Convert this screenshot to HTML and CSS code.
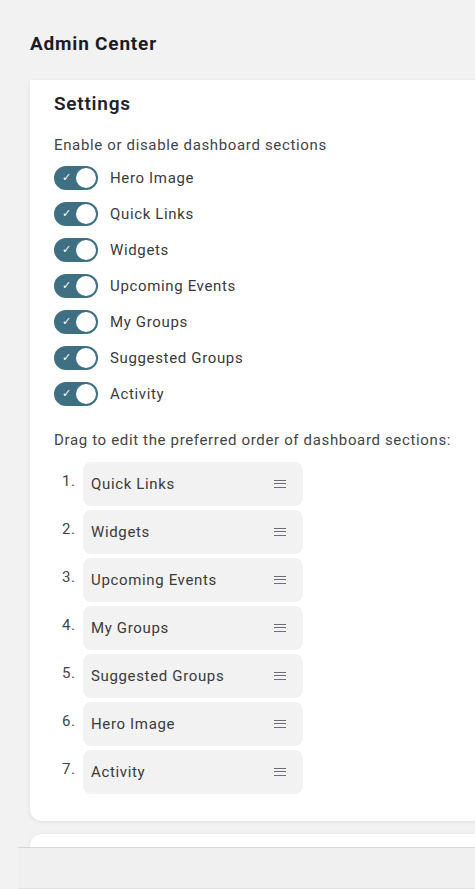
FILE: index.html
```html
<!DOCTYPE html>
<html lang="en">
<head>
    <meta charset="UTF-8">
    <meta name="viewport" content="width=device-width, initial-scale=1.0">
    <title>Admin Center</title>
    <link rel="stylesheet" href="styles.css">
</head>
<body>
    <div class="page">
        <h1 class="page-title">Admin Center</h1>

        <div class="card settings-card">
            <h2>Settings</h2>
            <p class="hint">Enable or disable dashboard sections</p>
            <div class="toggles">
                <label class="toggle-row"><span class="switch"><span class="check">&#10003;</span><span class="knob"></span></span>Hero Image</label>
                <label class="toggle-row"><span class="switch"><span class="check">&#10003;</span><span class="knob"></span></span>Quick Links</label>
                <label class="toggle-row"><span class="switch"><span class="check">&#10003;</span><span class="knob"></span></span>Widgets</label>
                <label class="toggle-row"><span class="switch"><span class="check">&#10003;</span><span class="knob"></span></span>Upcoming Events</label>
                <label class="toggle-row"><span class="switch"><span class="check">&#10003;</span><span class="knob"></span></span>My Groups</label>
                <label class="toggle-row"><span class="switch"><span class="check">&#10003;</span><span class="knob"></span></span>Suggested Groups</label>
                <label class="toggle-row"><span class="switch"><span class="check">&#10003;</span><span class="knob"></span></span>Activity</label>
            </div>

            <p class="hint order-hint">Drag to edit the preferred order of dashboard sections:</p>
            <ol class="order-list">
                <li><span class="num">1.</span><div class="drag-item">Quick Links<span class="handle"></span></div></li>
                <li><span class="num">2.</span><div class="drag-item">Widgets<span class="handle"></span></div></li>
                <li><span class="num">3.</span><div class="drag-item">Upcoming Events<span class="handle"></span></div></li>
                <li><span class="num">4.</span><div class="drag-item">My Groups<span class="handle"></span></div></li>
                <li><span class="num">5.</span><div class="drag-item">Suggested Groups<span class="handle"></span></div></li>
                <li><span class="num">6.</span><div class="drag-item">Hero Image<span class="handle"></span></div></li>
                <li><span class="num">7.</span><div class="drag-item">Activity<span class="handle"></span></div></li>
            </ol>
        </div>

        <div class="card next-card"></div>
    </div>

    <div class="footer-bar"></div>
</body>
</html>
```

FILE: styles.css
```css
html, body { overflow-x: hidden; }
body {
    margin: 0;
    background-color: #f2f2f2;
    font-family: Roboto, "Noto Sans", Arial, sans-serif;
    color: #444;
    letter-spacing: 0.65px;
}
.page { padding: 32px 0 60px 30px; }
.page-title {
    margin: 0 0 24px;
    font-size: 19px;
    line-height: 24px;
    font-weight: 700;
    color: #1c1c26;
    letter-spacing: 0.8px;
}
.card {
    background-color: #fff;
    width: 470px;
    box-shadow: 0 1px 4px rgba(0,0,0,0.08);
}
.settings-card {
    padding: 12px 24px 27px;
    border-radius: 0 0 12px 12px;
}
.next-card { margin-top: 13px; height: 60px; border-radius: 12px 12px 0 0; }
.settings-card h2 {
    margin: 0 0 19px;
    font-size: 19px;
    line-height: 24px;
    font-weight: 600;
    color: #22222c;
    letter-spacing: 0.75px;
}
.hint { margin: 0; font-size: 15px; line-height: 20px; color: #444; }
.toggles { display: flex; flex-direction: column; gap: 12px; margin-top: 11px; }
.toggle-row {
    display: flex;
    align-items: center;
    gap: 12px;
    font-size: 15px;
    line-height: 24px;
    color: #3a3a3a;
}
.switch {
    position: relative;
    display: inline-block;
    width: 44px;
    height: 24px;
    border-radius: 12px;
    background-color: #3e6f82;
}
.check {
    position: absolute;
    left: 8px;
    top: 0;
    font-size: 11px;
    line-height: 24px;
    color: #fff;
}
.knob {
    position: absolute;
    right: 2px;
    top: 2px;
    width: 20px;
    height: 20px;
    border-radius: 50%;
    background-color: #fff;
}
.order-hint { margin-top: 24px; }
.order-list {
    list-style: none;
    margin: 12px 0 0;
    padding: 0;
    display: flex;
    flex-direction: column;
    gap: 4px;
}
.order-list li { display: flex; align-items: flex-start; }
.num {
    width: 21px;
    padding-left: 8px;
    font-size: 15px;
    line-height: 20px;
    padding-top: 9px;
    color: #444;
}
.drag-item {
    display: flex;
    align-items: center;
    justify-content: space-between;
    width: 220px;
    height: 44px;
    padding: 0 17px 0 8px;
    box-sizing: border-box;
    border-radius: 8px;
    background-color: #f2f2f2;
    font-size: 15px;
    color: #3a3a3a;
}
.handle {
    width: 12px;
    height: 8px;
    border-top: 1.5px solid #6e6e78;
    border-bottom: 1.5px solid #6e6e78;
    position: relative;
    box-sizing: border-box;
}
.handle::after {
    content: "";
    position: absolute;
    left: 0;
    right: 0;
    top: 1.75px;
    height: 1.5px;
    background-color: #6e6e78;
}
.footer-bar {
    position: fixed;
    left: 18px;
    right: 0;
    bottom: 0;
    height: 40px;
    background-color: #f0f0f0;
    border-top: 1px solid #d6d6d6;
    border-bottom: 1px solid #e2e2e2;
}
```
